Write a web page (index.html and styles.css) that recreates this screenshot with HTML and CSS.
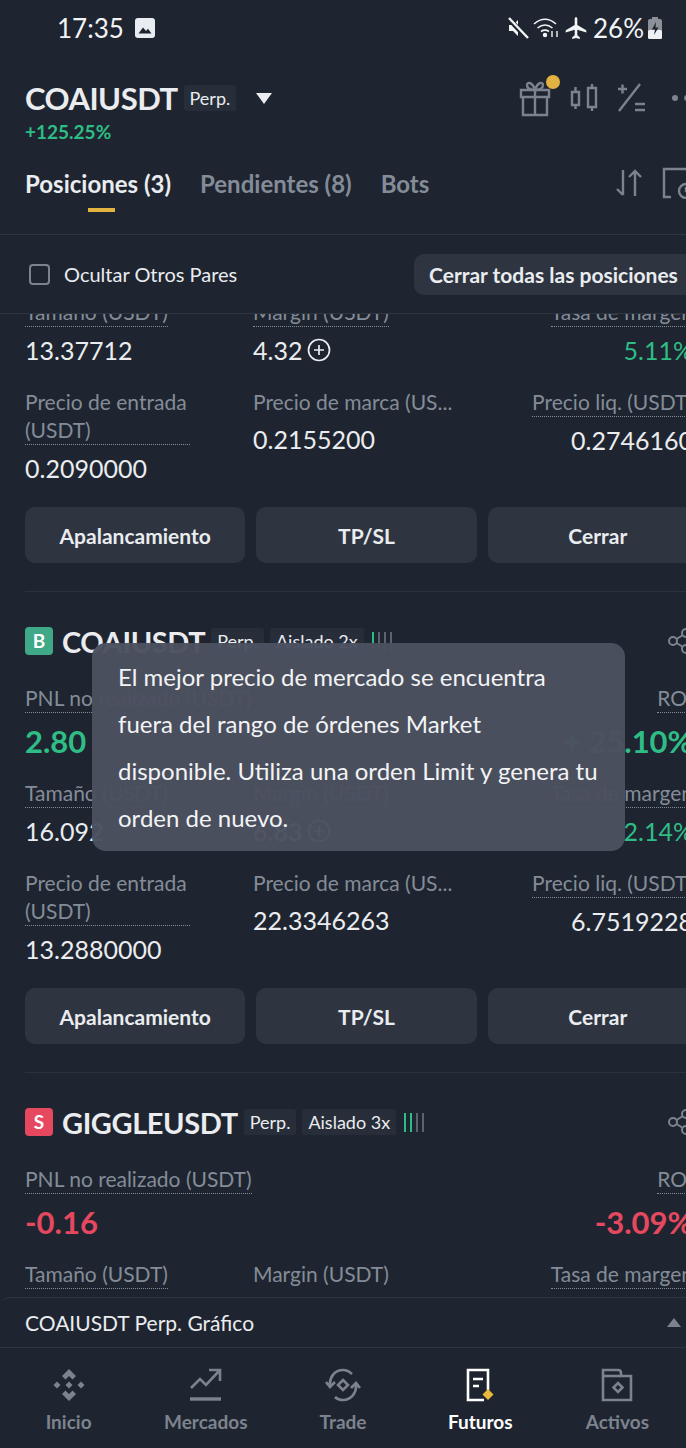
FILE: index.html
```html
<!DOCTYPE html>
<html lang="en">
  <head>
    <meta charset="UTF-8" />
    <meta name="viewport" content="width=device-width, initial-scale=1.0" />
    <title>Futuros</title>
    <link rel="stylesheet" href="styles.css">
  </head>
  <body>
    <main class="screen">
      <div class="statusBar">
        <div class="statusLeft">
          <span class="clock">17:35</span>
          <svg width="20" height="20" viewBox="0 0 20 20"><rect x="0" y="0" width="20" height="20" rx="3" fill="#e9ecf1"/><path d="M3.5 15.5 8 9.5l3 3.6 2-2.3 3.5 4.7z" fill="#1e2530"/></svg>
        </div>
        <div class="statusRight">
          <svg width="24" height="24" viewBox="0 0 24 24"><path d="M3 9h4l5-5v16l-5-5H3z" fill="#f2f3f5"/><path d="M3 3l18 19" stroke="#1e2530" stroke-width="5"/><path d="M3 2l19 20" stroke="#f2f3f5" stroke-width="2.4"/></svg>
          <svg width="28" height="24" viewBox="0 0 28 24" fill="none" stroke="#f2f3f5" stroke-width="1.6"><path d="M1 8c7-6 15-6 22 0"/><path d="M4.500 12c5-4 10-4 15 0"/><path d="M8 15.500c3-2 5-2 8 0"/><circle cx="12" cy="19" r="1.400" fill="#f2f3f5"/><path d="M19 15v6M24 21v-6" stroke-width="1.400"/></svg>
          <svg width="24" height="24" viewBox="0 0 24 24"><path d="M10.700 2.500c0-1.800 2.600-1.800 2.600 0V9l9 5.300v2.200l-9-2.700v5.500l2.500 1.900V23L12 22l-3.800 1v-1.800l2.500-1.900v-5.500l-9 2.700v-2.200l9-5.300z" fill="#f2f3f5"/></svg>
          <span class="battery">26%</span>
          <svg width="14" height="22" viewBox="0 0 14 22"><rect x="4" y="0" width="6" height="3" fill="#8b9099"/><rect x="0" y="2" width="14" height="20" rx="2" fill="#8b9099"/><rect x="0" y="13" width="14" height="9" rx="1.500" fill="#eef0f3"/><path d="M8 5 4 12.500h3L6 18l4.500-7.500h-3z" fill="#1e2530"/></svg>
        </div>
      </div>

      <header class="pairHeader">
        <div>
          <div class="pairRow">
            <h1>COAIUSDT</h1>
            <span class="tag">Perp.</span>
            <span class="caret"></span>
          </div>
          <div class="change">+125.25%</div>
        </div>
        <div class="headerIcons">
          <div class="giftWrap">
            <svg width="34" height="38" viewBox="0 0 34 38" fill="none" stroke="#7d838e" stroke-width="2.400"><path d="M3 11h28v7H3zM5 18h24v18H5zM17 11v25"/><path d="M17 11c-5 0-8-2-8-5s5-4 8 5c3-9 8-8 8-5s-3 5-8 5z"/></svg>
            <span class="dot"></span>
          </div>
          <svg width="28" height="30" viewBox="0 0 28 30" fill="none" stroke="#7d838e" stroke-width="2.400"><path d="M2 9h7v13H2zM5.500 4v5M5.500 22v4M18 5h8v19h-8zM22 1v4M22 24v4"/></svg>
          <svg width="30" height="30" viewBox="0 0 30 30" fill="none" stroke="#7d838e" stroke-width="2.400"><path d="M2 6h9M6.500 1.500v9M24 1 3 28M19 21h10M19 27h10"/></svg>
          <div class="moreDots"><span></span><span></span><span></span></div>
        </div>
      </header>

      <nav class="tabs">
        <a class="tab active">Posiciones (3)</a>
        <a class="tab">Pendientes (8)</a>
        <a class="tab">Bots</a>
        <div class="tabIcons">
          <svg width="28" height="30" viewBox="0 0 28 30" fill="none" stroke="#7d838e" stroke-width="2.400"><path d="M9 2v25M3 21l6 6 0 0M21 28V3M15 9l6-6 6 6"/></svg>
          <svg width="34" height="32" viewBox="0 0 34 32" fill="none" stroke="#7d838e" stroke-width="2.400"><path d="M9 30H2V2h30v14"/><circle cx="24" cy="24" r="7"/><path d="M24 20v4h3"/></svg>
        </div>
      </nav>

      <div class="filterRow">
        <label class="hideOthers"><span class="checkbox"></span>Ocultar Otros Pares</label>
        <button class="closeAll">Cerrar todas las posiciones</button>
      </div>

      <div class="list">
        <section class="position first">
          <div class="fields">
            <div class="field"><span class="label">Tamaño (USDT)</span><span class="value">13.37712</span></div>
            <div class="field"><span class="label">Margin (USDT)</span><span class="value">4.32 <svg class="plus" width="24" height="24" viewBox="0 0 24 24" fill="none" stroke="#eaecef" stroke-width="1.700"><circle cx="12" cy="12" r="10.500"/><path d="M12 7v10M7 12h10"/></svg></span></div>
            <div class="field right"><span class="label">Tasa de margen</span><span class="value up">5.11%</span></div>
          </div>
          <div class="fields second">
            <div class="field"><span class="label wrap">Precio de entrada (USDT)</span><span class="value">0.2090000</span></div>
            <div class="field"><span class="label plain">Precio de marca (US...</span><span class="value">0.2155200</span></div>
            <div class="field right"><span class="label">Precio liq. (USDT)</span><span class="value">0.2746160</span></div>
          </div>
          <div class="actions">
            <button>Apalancamiento</button>
            <button>TP/SL</button>
            <button>Cerrar</button>
          </div>
        </section>

        <section class="position">
          <div class="posHead">
            <span class="side buy">B</span>
            <span class="symbol">COAIUSDT</span>
            <span class="tag">Perp.</span>
            <span class="tag">Aislado 2x</span>
            <span class="bars"><i class="on"></i><i></i><i></i><i></i></span>
            <svg class="share" width="24" height="26" viewBox="0 0 24 26" fill="none" stroke="#7d838e" stroke-width="2"><circle cx="5" cy="13" r="4"/><circle cx="18" cy="5" r="4"/><circle cx="18" cy="21" r="4"/><path d="M8.500 11 15 7M8.500 15l6.500 4"/></svg>
          </div>
          <div class="fields pnl">
            <div class="field"><span class="label">PNL no realizado (USDT)</span><span class="value big up">2.80</span></div>
            <div class="field"></div>
            <div class="field right"><span class="label">ROI</span><span class="value big up">+ 25.10%</span></div>
          </div>
          <div class="fields">
            <div class="field"><span class="label">Tamaño (USDT)</span><span class="value">16.092</span></div>
            <div class="field"><span class="label">Margin (USDT)</span><span class="value">6.83 <svg class="plus" width="24" height="24" viewBox="0 0 24 24" fill="none" stroke="#eaecef" stroke-width="1.700"><circle cx="12" cy="12" r="10.500"/><path d="M12 7v10M7 12h10"/></svg></span></div>
            <div class="field right"><span class="label">Tasa de margen</span><span class="value up">2.14%</span></div>
          </div>
          <div class="fields second">
            <div class="field"><span class="label wrap">Precio de entrada (USDT)</span><span class="value">13.2880000</span></div>
            <div class="field"><span class="label plain">Precio de marca (US...</span><span class="value">22.3346263</span></div>
            <div class="field right"><span class="label">Precio liq. (USDT)</span><span class="value">6.7519228</span></div>
          </div>
          <div class="actions">
            <button>Apalancamiento</button>
            <button>TP/SL</button>
            <button>Cerrar</button>
          </div>
        </section>

        <section class="position">
          <div class="posHead">
            <span class="side sell">S</span>
            <span class="symbol">GIGGLEUSDT</span>
            <span class="tag">Perp.</span>
            <span class="tag">Aislado 3x</span>
            <span class="bars"><i class="on"></i><i class="on"></i><i></i><i></i></span>
            <svg class="share" width="24" height="26" viewBox="0 0 24 26" fill="none" stroke="#7d838e" stroke-width="2"><circle cx="5" cy="13" r="4"/><circle cx="18" cy="5" r="4"/><circle cx="18" cy="21" r="4"/><path d="M8.500 11 15 7M8.500 15l6.500 4"/></svg>
          </div>
          <div class="fields pnl">
            <div class="field"><span class="label">PNL no realizado (USDT)</span><span class="value big down">-0.16</span></div>
            <div class="field"></div>
            <div class="field right"><span class="label">ROI</span><span class="value big down">-3.09%</span></div>
          </div>
          <div class="fields">
            <div class="field"><span class="label">Tamaño (USDT)</span></div>
            <div class="field"><span class="label plain">Margin (USDT)</span></div>
            <div class="field right"><span class="label">Tasa de margen</span></div>
          </div>
        </section>

        <div class="toast">El mejor precio de mercado se encuentra fuera del rango de órdenes Market disponible. Utiliza una orden Limit y genera tu orden de nuevo.</div>
      </div>

      <div class="chartBar">
        <span>COAIUSDT Perp. Gráfico</span>
        <span class="upArrow"></span>
      </div>

      <footer class="bottomNav">
        <a class="navItem">
          <svg width="36" height="36" viewBox="0 0 36 36" fill="#7d838e"><path d="M18 2l7 7-3.500 3.500L18 9l-3.500 3.500L11 9zM18 14.500l3.500 3.500-3.500 3.500-3.500-3.500zM6 14.500 9.500 18 6 21.500 2.500 18zM30 14.500l3.500 3.500-3.500 3.500-3.500-3.500zM11 27l3.500-3.500L18 27l3.500-3.500L25 27l-7 7z"/></svg>
          Inicio
        </a>
        <a class="navItem">
          <svg width="36" height="36" viewBox="0 0 36 36" fill="none" stroke="#7d838e" stroke-width="2.600"><path d="M3 21l9-9 6 6L31 4M21 3h11v11"/><path d="M2 32h31" stroke-width="3.400"/></svg>
          Mercados
        </a>
        <a class="navItem">
          <svg width="36" height="36" viewBox="0 0 36 36" fill="none" stroke="#7d838e" stroke-width="2.600"><path d="M5 19C4 10 10 3 18 3c4 0 7 2 9 4M1 15l4 5 5-5M31 17c1 9-5 16-13 16-4 0-6-1-8-3M26 21l5-5 4 5"/><path d="M18 13l5 5-5 5-5-5z"/></svg>
          Trade
        </a>
        <a class="navItem active">
          <svg width="36" height="36" viewBox="0 0 36 36" fill="none" stroke="#fff" stroke-width="2.600"><path d="M22 33H6V3h20v20"/><path d="M11 12h10M11 19h6"/><path d="M26 22l5.500 5.500L26 33l-5.500-5.500z" fill="#e9b93b" stroke="none"/></svg>
          Futuros
        </a>
        <a class="navItem">
          <svg width="36" height="36" viewBox="0 0 36 36" fill="none" stroke="#7d838e" stroke-width="2.600"><path d="M4 33V3h15c2 0 3 1 3 3v3h10v24z"/><path d="M4 9h18"/><path d="M19 16l4.500 4.500L19 25l-4.500-4.500z"/></svg>
          Activos
        </a>
      </footer>
    </main>
  </body>
</html>
```

FILE: styles.css
```css
* {
  margin: 0;
  padding: 0;
  box-sizing: border-box;
  font-family: Lato, "Liberation Sans", sans-serif;
}

body {
  background-color: #1e2530;
  color: #eaecef;
  overflow: hidden;
}

.screen {
  width: 686px;
  height: 1448px;
  display: flex;
  flex-direction: column;
  overflow: hidden;
}

.statusBar {
  height: 56px;
  flex-shrink: 0;
  display: flex;
  justify-content: space-between;
  align-items: center;
  padding: 0 24px 0 57px;
}

.statusLeft,
.statusRight {
  display: flex;
  align-items: center;
  gap: 11px;
}

.statusRight {
  gap: 3px;
}

.clock,
.battery {
  font-size: 26px;
  color: #f2f3f5;
}

.battery {
  margin: 0 1px 0 2px;
}

.pairHeader {
  height: 96px;
  flex-shrink: 0;
  display: flex;
  justify-content: space-between;
  padding: 24px 0 0 25px;
}

.pairRow {
  display: flex;
  align-items: center;
  height: 36px;
}

h1 {
  font-size: 31px;
  font-weight: 700;
  letter-spacing: -0.5px;
}

.tag {
  font-size: 18px;
  padding: 0 6px;
  height: 26px;
  line-height: 26px;
  background-color: #272e39;
  border-radius: 3px;
  margin-left: 6px;
  white-space: nowrap;
}

.caret {
  width: 0;
  height: 0;
  border-left: 8px solid transparent;
  border-right: 8px solid transparent;
  border-top: 11px solid #eaecef;
  margin-left: 20px;
}

.change {
  color: #2ebd85;
  font-size: 19px;
  font-weight: 700;
  margin-top: 4px;
}

.headerIcons {
  display: flex;
  align-items: center;
  height: 36px;
  gap: 18px;
  margin-right: -16px;
}

.giftWrap {
  position: relative;
  height: 38px;
}

.dot {
  position: absolute;
  top: -4px;
  right: -8px;
  width: 14px;
  height: 14px;
  border-radius: 50%;
  background-color: #e3b341;
}

.moreDots {
  display: flex;
  gap: 6px;
  margin-left: 8px;
}

.moreDots span {
  width: 6px;
  height: 6px;
  border-radius: 50%;
  background-color: #7d838e;
}

.tabs {
  height: 83px;
  flex-shrink: 0;
  display: flex;
  gap: 29px;
  align-items: center;
  padding: 0 0 20px 25px;
  border-bottom: 1px solid #2f3641;
  position: relative;
}

.tab {
  font-size: 24px;
  font-weight: 700;
  color: #848c98;
  position: relative;
}

.tab.active {
  color: #eaecef;
}

.tab.active::after {
  content: "";
  position: absolute;
  left: 63px;
  bottom: -14px;
  width: 27px;
  height: 4px;
  background-color: #e3b341;
}

.tabIcons {
  margin-left: auto;
  margin-right: -10px;
  display: flex;
  align-items: center;
  gap: 20px;
}

.filterRow {
  height: 79px;
  flex-shrink: 0;
  display: flex;
  justify-content: space-between;
  align-items: center;
  padding-left: 29px;
  border-bottom: 1px solid #2f3641;
}

.hideOthers {
  display: flex;
  align-items: center;
  gap: 14px;
  font-size: 20px;
}

.checkbox {
  width: 21px;
  height: 21px;
  border: 2px solid #7d838e;
  border-radius: 4px;
}

.closeAll {
  flex-shrink: 0;
  width: 290px;
  height: 41px;
  margin-right: -18px;
  border: none;
  border-radius: 10px;
  background-color: #2e3541;
  color: #eaecef;
  font-size: 21px;
  font-weight: 700;
  text-align: left;
  padding-left: 15px;
}

.list {
  flex: 1;
  min-height: 0;
  overflow: hidden;
  position: relative;
}

.position {
  width: 683px;
  margin-left: 25px;
  padding: 32px 0 28px;
  border-bottom: 1px solid #2b323d;
}

.position.first {
  margin-top: -16px;
  padding-top: 0;
}

.posHead {
  display: flex;
  align-items: center;
  height: 34px;
  margin-bottom: 26px;
  position: relative;
}

.side {
  width: 28px;
  height: 28px;
  border-radius: 4px;
  font-size: 19px;
  font-weight: 700;
  color: #fff;
  text-align: center;
  line-height: 28px;
  margin-right: 9px;
}

.buy {
  background-color: #3fa886;
}

.sell {
  background-color: #e5485f;
}

.symbol {
  font-size: 29px;
  font-weight: 700;
  letter-spacing: -0.4px;
}

.bars {
  display: flex;
  gap: 4px;
  margin-left: 8px;
}

.bars i {
  width: 2px;
  height: 19px;
  background-color: #5c636e;
}

.bars i.on {
  background-color: #2ebd85;
}

.share {
  position: absolute;
  right: 16px;
  top: 4px;
}

.fields {
  display: grid;
  grid-template-columns: 228px 1fr auto;
  width: 668px;
  margin-bottom: 20px;
}

.fields.second {
  margin-bottom: 21px;
}

.field {
  display: flex;
  flex-direction: column;
  align-items: flex-start;
}

.field.right {
  align-items: flex-end;
}

.label {
  font-size: 21px;
  line-height: 28px;
  color: #848c98;
  border-bottom: 1px dotted #848c98;
}

.label.wrap {
  width: 165px;
}

.label.plain {
  border-bottom: none;
}

.value {
  font-size: 25px;
  line-height: 36px;
  margin-top: 5px;
  display: flex;
  align-items: center;
  gap: 5px;
}

.big {
  font-size: 31px;
  font-weight: 700;
  margin-top: 10px;
}

.up {
  color: #2ebd85;
}

.down {
  color: #e5485f;
}

.actions {
  display: flex;
  gap: 11px;
}

.actions button {
  flex: 1;
  height: 56px;
  border: none;
  border-radius: 10px;
  background-color: #2e3541;
  color: #eaecef;
  font-size: 21px;
  font-weight: 700;
}

.toast {
  position: absolute;
  left: 92px;
  top: 329px;
  width: 533px;
  height: 208px;
  padding: 10px 26px;
  border-radius: 14px;
  background-color: rgba(75, 81, 96, 0.97);
  color: #f2f3f5;
  font-size: 24px;
  line-height: 47px;
}

.chartBar {
  height: 51px;
  flex-shrink: 0;
  display: flex;
  justify-content: space-between;
  align-items: center;
  padding: 0 5px 0 25px;
  font-size: 21px;
  border-top: 1px solid #2f3641;
  border-bottom: 1px solid #2f3641;
  border-top-left-radius: 10px;
}

.upArrow {
  width: 0;
  height: 0;
  border-left: 7px solid transparent;
  border-right: 7px solid transparent;
  border-bottom: 9px solid #7d838e;
}

.bottomNav {
  height: 100px;
  flex-shrink: 0;
  display: flex;
  justify-content: space-between;
  padding: 19px 0 0 0;
}

.navItem {
  width: 143px;
  display: flex;
  flex-direction: column;
  align-items: center;
  gap: 7px;
  font-size: 19px;
  font-weight: 700;
  color: #7d838e;
}

.navItem.active {
  color: #fff;
}
```
